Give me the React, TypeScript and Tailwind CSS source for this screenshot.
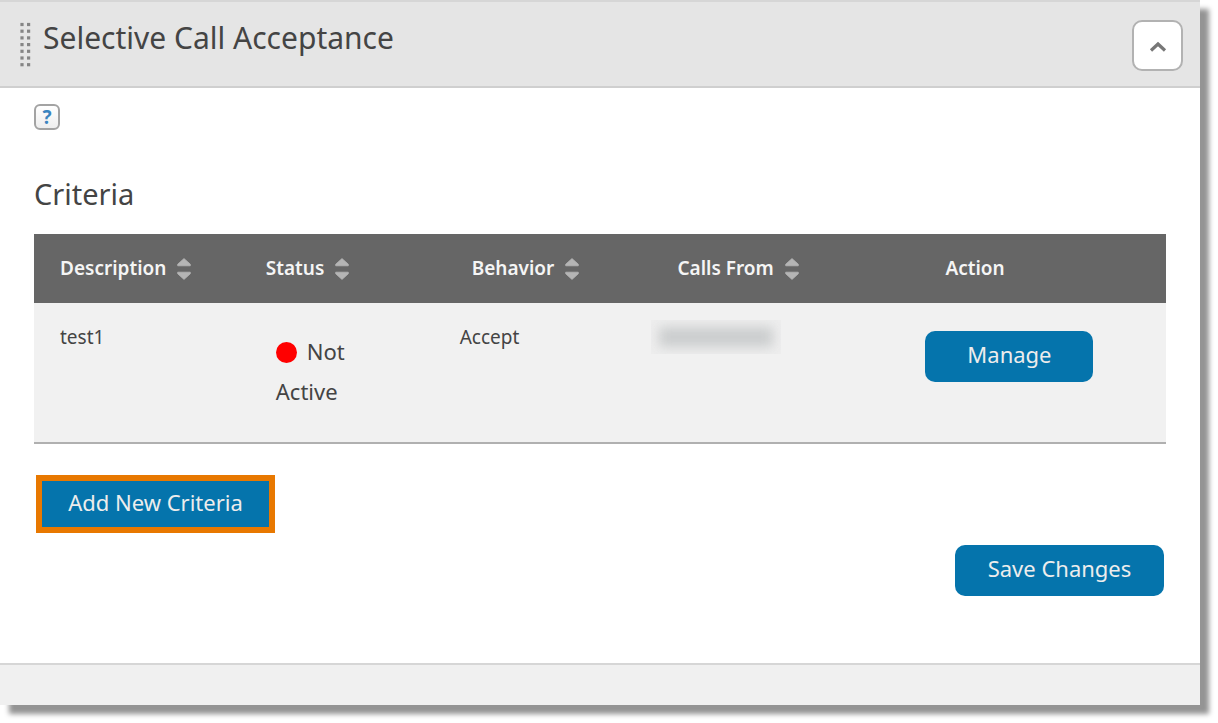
import { useState } from 'react';

interface Criterion {
  description: string;
  active: boolean;
  behavior: string;
}

const criteria: Criterion[] = [
  { description: 'test1', active: false, behavior: 'Accept' },
];

const DragHandle = ({ className }: { className?: string }) => (
  <svg className={className} viewBox="0 0 12 46" fill="#858585">
    {[0, 1, 2, 3, 4, 5, 6].map((row) => (
      <g key={row}>
        <rect x="1.4" y={row * 6.7 + 0.9} width="3.2" height="3.2" />
        <rect x="8" y={row * 6.7 + 0.9} width="3.2" height="3.2" />
      </g>
    ))}
  </svg>
);

const ChevronUpIcon = ({ className }: { className?: string }) => (
  <svg className={className} viewBox="0 0 18 12" fill="none" stroke="#777777" strokeWidth={3.2}>
    <path d="M2 10.5L9 4L16 10.5" />
  </svg>
);

const SortIcon = ({ className }: { className?: string }) => (
  <svg className={className} viewBox="0 0 14 22" fill="#b5b5b5" stroke="#b5b5b5" strokeLinejoin="round">
    <path d="M7 0.6L13.3 6.2V7.8H0.7V6.2Z" strokeWidth={0.8} />
    <path d="M7 21.4L13.3 15.8V14.2H0.7V15.8Z" strokeWidth={0.8} />
  </svg>
);

const ColumnHeader = ({ label, className }: { label: string; className: string }) => (
  <th className={`${className} px-[26px] text-left font-semibold`}>
    <button type="button" className="flex items-center gap-[11px] whitespace-nowrap">
      {label}
      <SortIcon className="h-[22px] w-[14px]" />
    </button>
  </th>
);

const primaryButton = 'h-[51px] rounded-[10px] bg-[#0574ac] pb-1 text-[22px] text-[#ededed] hover:bg-[#04628f]';

export default function App() {
  const [open, setOpen] = useState(true);

  return (
    <div className="flex min-h-screen bg-white pr-[18px] pb-[18px] font-['Noto_Sans',sans-serif] text-[#444444]">
      <main className="flex flex-1 flex-col border-t-2 border-[#d6d6d6] bg-white shadow-[9px_9px_5px_#949494]">
        <header className="flex h-[86px] items-start justify-between border-b-2 border-[#cfcfcf] bg-[#e5e5e5] pr-[17px] pl-[19px]">
          <div className="flex items-start gap-3 pt-4">
            <DragHandle className="mt-1 h-[46px] w-3" />
            <h1 className="text-[30px] leading-10">Selective Call Acceptance</h1>
          </div>
          <button
            type="button"
            aria-label="Toggle section"
            aria-expanded={open}
            onClick={() => setOpen(!open)}
            className="mt-[18px] flex size-[51px] items-center justify-center rounded-[10px] border-2 border-[#b2b2b2] bg-white"
          >
            <ChevronUpIcon className={open ? 'h-3 w-[18px]' : 'h-3 w-[18px] rotate-180'} />
          </button>
        </header>

        {open && (
          <section className="flex-1 pt-4 pr-[34px] pb-16 pl-[34px]">
            <button
              type="button"
              aria-label="Help"
              className="flex size-[26px] items-center justify-center rounded-md border-2 border-[#a3a3a3] bg-linear-to-b from-white to-[#eeeeee] text-[19px] leading-none font-bold text-[#3b85c0]"
            >
              ?
            </button>

            <h2 className="mt-11 text-[29px] leading-10">Criteria</h2>

            <table className="mt-5 w-full table-fixed border-collapse text-[19px]">
              <thead>
                <tr className="h-[69px] bg-[#666666] text-[#f5f5f5]">
                  <ColumnHeader label="Description" className="w-2/11" />
                  <ColumnHeader label="Status" className="w-2/11" />
                  <ColumnHeader label="Behavior" className="w-2/11" />
                  <ColumnHeader label="Calls From" className="w-[268px]" />
                  <th className="px-[26px] text-left font-semibold">Action</th>
                </tr>
              </thead>
              <tbody>
                {criteria.map((item) => (
                  <tr key={item.description} className="h-[140px] border-b-2 border-[#b0b0b0] bg-[#f1f1f1] align-top">
                    <td className="pt-5 pl-[26px] leading-7">{item.description}</td>
                    <td className="pt-7 pl-9 text-[22px] leading-10">
                      <div className="w-24">
                        <span className="mr-[10px] inline-block size-[21px] rounded-full bg-[#ff0000] align-[-3px]" />
                        {item.active ? 'Active' : 'Not Active'}
                      </div>
                    </td>
                    <td className="pt-5 pl-[14px] leading-7">{item.behavior}</td>
                    <td className="pt-[17px]">
                      <div className="flex h-[34px] w-[130px] items-center overflow-hidden bg-[#eeeeee] px-2">
                        <div className="h-5 w-full bg-[#cbcdce] blur-[6px]" />
                      </div>
                    </td>
                    <td className="pt-7 pl-[6px]">
                      <button type="button" className={`${primaryButton} w-[168px]`}>Manage</button>
                    </td>
                  </tr>
                ))}
              </tbody>
            </table>

            <button
              type="button"
              className="mt-[31px] ml-[2px] block h-[58px] w-[239px] border-6 border-[#e87800] bg-[#0574ac] pb-1 text-[22px] leading-7 text-[#ededed] hover:bg-[#04628f]"
            >
              Add New Criteria
            </button>

            <div className="mt-3 flex justify-end pr-[2px]">
              <button type="button" className={`${primaryButton} w-[209px]`}>Save Changes</button>
            </div>
          </section>
        )}

        <footer className="h-[42px] border-t-2 border-[#d6d6d6] bg-[#f0f0f0]" />
      </main>
    </div>
  );
}
